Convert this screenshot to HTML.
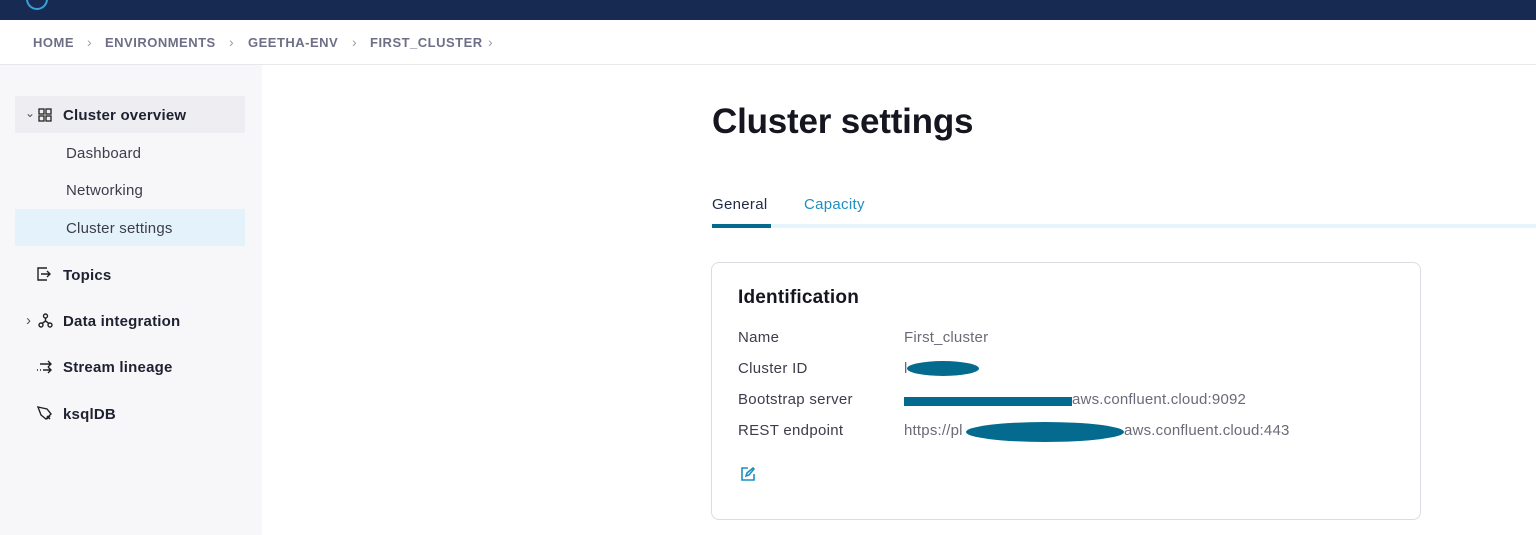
<!DOCTYPE html>
<html><head><style>
*{margin:0;padding:0;box-sizing:border-box}
body{width:1536px;height:535px;overflow:hidden;background:#fff;font-family:"Liberation Sans",sans-serif;position:relative}
.top{position:absolute;left:0;top:0;width:1536px;height:20px;background:#172b52}
.logo{position:absolute;left:26px;top:-12px;width:22px;height:22px;border:2px solid #3aa0d8;border-radius:50%}
.bc{position:absolute;left:0;top:20px;width:1536px;height:45px;border-bottom:1px solid #e8e8ec;background:#fff}
.bc span{position:absolute;top:15px;font-size:13px;font-weight:bold;color:#6e6f86;letter-spacing:.5px}
.bc i{position:absolute;top:14px;font-style:normal;font-size:14px;color:#9a9bab}
.side{position:absolute;left:0;top:65px;width:262px;height:470px;background:#f7f7f9}
.it{position:absolute;font-size:15px;color:#1f2130;letter-spacing:.2px}
.b{font-weight:bold}
.sub{position:absolute;left:15px;width:230px;height:37px;font-size:15px;color:#3c3d4a;padding:11px 0 0 51px;letter-spacing:.2px}
h1{position:absolute;left:712px;top:102px;font-size:35px;font-weight:bold;color:#15161f;letter-spacing:-.2px}
.tab{position:absolute;top:196px;font-size:15px;letter-spacing:.3px}
.card{position:absolute;left:711px;top:262px;width:710px;height:258px;border:1px solid #dcdce2;border-radius:8px}
.lb{position:absolute;left:738px;font-size:15px;color:#3c3d4a;letter-spacing:.3px}
.vl{position:absolute;left:904px;font-size:15px;color:#6a6b78;letter-spacing:.2px}
.red{position:absolute;background:#046b8f;border-radius:50%}
</style></head><body>
<div class="top"><div class="logo"></div></div>
<div class="bc">
<span style="left:33px">HOME</span><i style="left:87px">›</i>
<span style="left:105px">ENVIRONMENTS</span><i style="left:229px">›</i>
<span style="left:248px">GEETHA-ENV</span><i style="left:352px">›</i>
<span style="left:370px">FIRST_CLUSTER</span><i style="left:488px">›</i>
</div>
<div class="side"></div>
<div style="position:absolute;left:15px;top:96px;width:230px;height:37px;background:#eeeef2"></div>
<div class="it" style="left:25px;top:106px;font-size:12px;color:#555">⌄</div>
<svg style="position:absolute;left:38px;top:108px" width="14" height="14" viewBox="0 0 14 14" fill="none" stroke="#222" stroke-width="1.3"><rect x="1" y="1" width="5" height="5"/><rect x="8" y="1" width="5" height="5"/><rect x="1" y="8" width="5" height="5"/><rect x="8" y="8" width="5" height="5"/></svg>
<div class="it b" style="left:63px;top:107px">Cluster overview</div>
<div class="sub" style="top:134px">Dashboard</div>
<div class="sub" style="top:171px">Networking</div>
<div class="sub" style="top:209px;background:#e3f2fb">Cluster settings</div>
<svg style="position:absolute;left:37px;top:267px" width="15" height="14" viewBox="0 0 15 14" fill="none" stroke="#222" stroke-width="1.4"><path d="M10 1H1v12h9M4 7h9M10 4l3 3-3 3"/></svg>
<div class="it b" style="left:63px;top:267px">Topics</div>
<div class="it" style="left:26px;top:312px;color:#555">›</div>
<svg style="position:absolute;left:38px;top:313px" width="15" height="15" viewBox="0 0 15 15" fill="none" stroke="#222" stroke-width="1.4"><circle cx="7.5" cy="3" r="2"/><circle cx="3" cy="12" r="2"/><circle cx="12" cy="12" r="2"/><path d="M7.5 5v3L4 10.5M7.5 8l3.5 2.5"/></svg>
<div class="it b" style="left:63px;top:313px">Data integration</div>
<svg style="position:absolute;left:36px;top:360px" width="17" height="14" viewBox="0 0 17 14" fill="none" stroke="#222" stroke-width="1.4"><path d="M4 4h11M12 1l3 3-3 3M1 10h1M4 10h1M7 10h8M12 7l3 3-3 3"/></svg>
<div class="it b" style="left:63px;top:359px">Stream lineage</div>
<svg style="position:absolute;left:37px;top:405px" width="16" height="16" viewBox="0 0 16 16" fill="none" stroke="#222" stroke-width="1.4"><path d="M1 2l9 2 4 5-5 5-5-4z M10 11l3 3M13 11l-3 3"/></svg>
<div class="it b" style="left:63px;top:406px">ksqlDB</div>
<h1>Cluster settings</h1>
<div class="tab" style="left:712px;color:#1f2a44">General</div>
<div class="tab" style="left:804px;color:#1f8fc3">Capacity</div>
<div style="position:absolute;left:712px;top:224px;width:824px;height:4px;background:#e6f4fb"></div>
<div style="position:absolute;left:712px;top:224px;width:59px;height:4px;background:#046b8f"></div>
<div class="card"></div>
<div style="position:absolute;left:738px;top:287px;font-size:19px;font-weight:bold;color:#15161f;letter-spacing:.2px">Identification</div>
<div class="lb" style="top:329px">Name</div><div class="vl" style="top:329px">First_cluster</div>
<div class="lb" style="top:360px">Cluster ID</div><div class="vl" style="top:360px">l</div>
<div class="red" style="left:907px;top:361px;width:72px;height:15px"></div>
<div class="lb" style="top:391px">Bootstrap server</div><div class="vl" style="top:391px;left:1072px">aws.confluent.cloud:9092</div>
<div style="position:absolute;left:904px;top:397px;width:168px;height:9px;background:#046b8f"></div>
<div class="lb" style="top:422px">REST endpoint</div><div class="vl" style="top:422px">https://pl</div>
<div class="red" style="left:966px;top:422px;width:158px;height:20px"></div>
<div class="vl" style="top:422px;left:1124px">aws.confluent.cloud:443</div>
<svg style="position:absolute;left:741px;top:467px" width="14" height="14" viewBox="0 0 14 14" fill="none" stroke="#1f8fc3" stroke-width="1.6"><path d="M7 1H1v12h12V7M5 9l1-3 6-5 1 1-5 6z"/></svg>
</body></html>
